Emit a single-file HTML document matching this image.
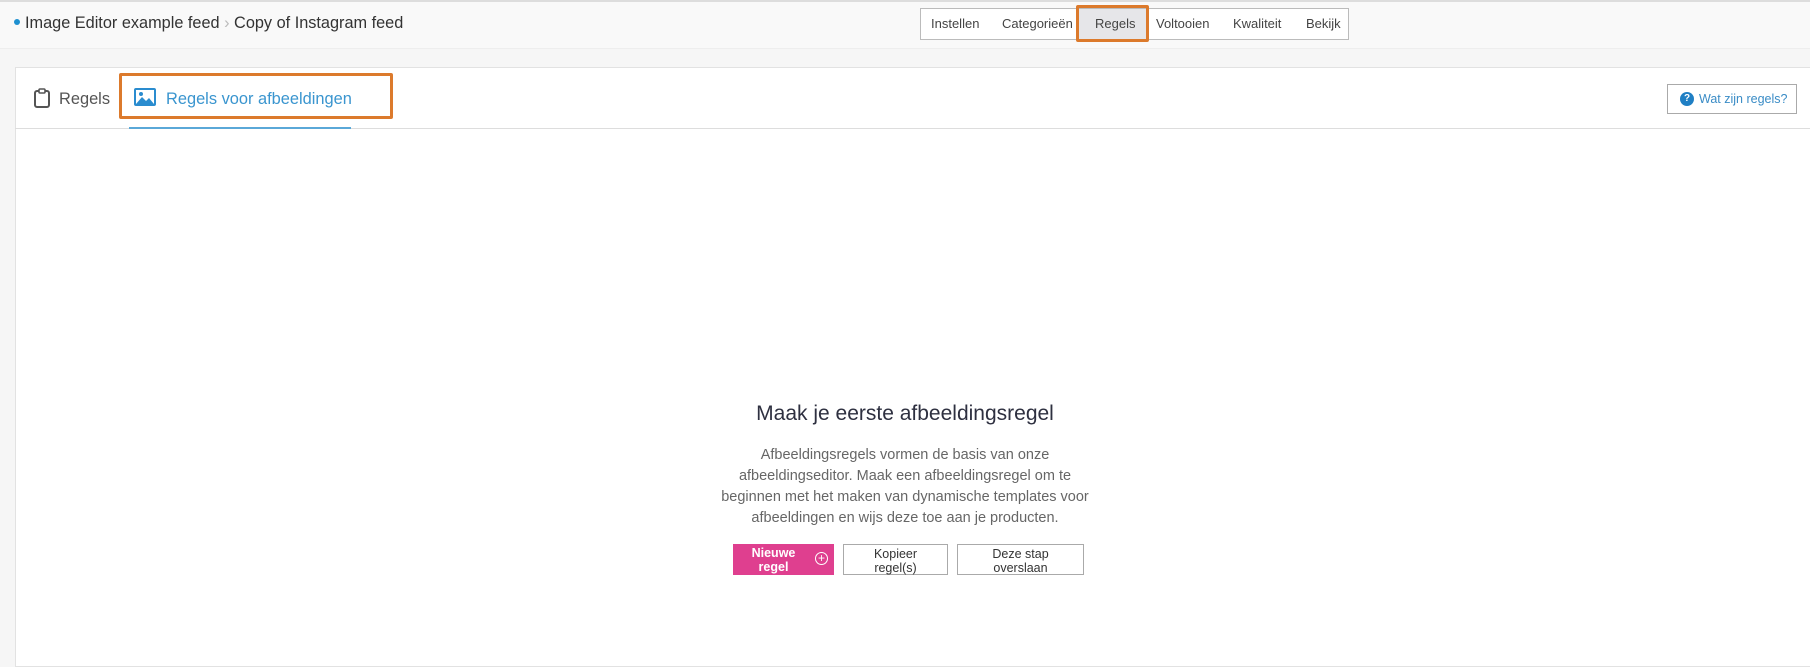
<!DOCTYPE html>
<html><head><meta charset="utf-8"><style>
*{box-sizing:border-box;margin:0;padding:0}
body{width:1810px;height:617px;overflow:hidden;background:#f6f6f6;font-family:"Liberation Sans",sans-serif;position:relative;color:#333}
.top{position:absolute;left:0;top:0;width:1810px;height:49px;background:#f9f9f9;border-top:2px solid #ddd;border-bottom:1px solid #eee}
.bc{position:absolute;left:14px;top:14px;font-size:16.3px;color:#333}
.dot{display:inline-block;width:6px;height:6px;border-radius:50%;background:#1e90d0;vertical-align:middle;margin-right:5px;position:relative;top:-2px}
.nav{position:absolute;left:920px;top:8px;width:429px;height:32px;border:1px solid #bbb;background:#fff;font-size:13px;color:#444}
.act{position:absolute;left:1079px;top:9px;width:68px;height:30px;background:#e6e6e9}
.ob1{position:absolute;left:1076px;top:5px;width:73px;height:37px;border:3px solid #dc7a2c;border-radius:2px}
.card{position:absolute;left:15px;top:67px;width:1800px;height:600px;background:#fff;border:1px solid #e2e2e2}
.tabline{position:absolute;left:15px;top:128px;width:1795px;height:1px;background:#ddd}
.ul{position:absolute;left:129px;top:127px;width:222px;height:2px;background:#5aa8d8}
.ob2{position:absolute;left:119px;top:73px;width:274px;height:46px;border:3px solid #dc7a2c;border-radius:2px}
.t{position:absolute;font-size:16.4px}
.help{position:absolute;left:1667px;top:84px;width:130px;height:30px;border:1px solid #aaa;background:#fff;font-size:12.5px;color:#3a8cc6;padding:7px 0 0 31px}
.q{position:absolute;left:12px;top:7px;width:14px;height:14px;border-radius:50%;background:#1f7fc4;color:#fff;font-size:10px;font-weight:bold;text-align:center;line-height:14px}
h1{position:absolute;left:605px;width:600px;top:402px;text-align:center;font-weight:normal;font-size:21px;color:#2e3040}
p{position:absolute;left:713px;width:384px;top:445px;text-align:center;font-size:14.5px;line-height:21px;color:#666}
.b{position:absolute;top:544px;height:31px;font-size:12.5px;line-height:14px;text-align:center;padding-top:2px}
</style></head><body>
<div class="top"></div>
<div class="bc"><span class="dot"></span>Image Editor example feed <span style="color:#bbb">›</span> Copy of Instagram feed</div>
<div class="nav"></div>
<div class="act"></div>
<div style="position:absolute;left:920px;top:8px;width:429px;height:32px;font-size:13px;color:#444">
<span style="position:absolute;left:11px;top:8px">Instellen</span>
<span style="position:absolute;left:82px;top:8px">Categorieën</span>
<span style="position:absolute;left:175px;top:8px">Regels</span>
<span style="position:absolute;left:236px;top:8px">Voltooien</span>
<span style="position:absolute;left:313px;top:8px">Kwaliteit</span>
<span style="position:absolute;left:386px;top:8px">Bekijk</span>
</div>
<div class="ob1"></div>
<div class="card"></div>
<div class="tabline"></div>
<svg style="position:absolute;left:33px;top:88px" width="18" height="20" viewBox="0 0 18 20"><rect x="2" y="3" width="14" height="16" rx="2" fill="none" stroke="#555" stroke-width="2"/><rect x="6" y="1" width="6" height="4" rx="1" fill="#fff" stroke="#555" stroke-width="1.6"/></svg>
<div class="t" style="left:59px;top:90px;color:#555">Regels</div>
<svg style="position:absolute;left:134px;top:88px" width="22" height="18" viewBox="0 0 22 18"><rect x="0" y="0" width="22" height="18" rx="2" fill="#2a8ccf"/><rect x="2" y="2" width="18" height="14" fill="#fff"/><path d="M2 16 L8 9 L12 13 L15 10 L20 16Z" fill="#2a8ccf"/><circle cx="7" cy="6" r="2" fill="#2a8ccf"/></svg>
<div class="t" style="left:166px;top:90px;color:#3a95cf">Regels voor afbeeldingen</div>
<div class="ul"></div>
<div class="ob2"></div>
<div class="help"><span class="q">?</span>Wat zijn regels?</div>
<h1>Maak je eerste afbeeldingsregel</h1>
<p>Afbeeldingsregels vormen de basis van onze afbeeldingseditor. Maak een afbeeldingsregel om te beginnen met het maken van dynamische templates voor afbeeldingen en wijs deze toe aan je producten.</p>
<div class="b" style="left:733px;width:101px;background:#df3f8f;color:#fff;font-weight:bold;padding-right:20px">Nieuwe<br>regel<span style="position:absolute;right:6px;top:8px;width:13px;height:13px;border:1px solid #fff;border-radius:50%;font-weight:normal;font-size:12px;line-height:11px">+</span></div>
<div class="b" style="left:843px;width:105px;border:1px solid #aaa;color:#333">Kopieer<br>regel(s)</div>
<div class="b" style="left:957px;width:127px;border:1px solid #aaa;color:#333">Deze stap<br>overslaan</div>
</body></html>
